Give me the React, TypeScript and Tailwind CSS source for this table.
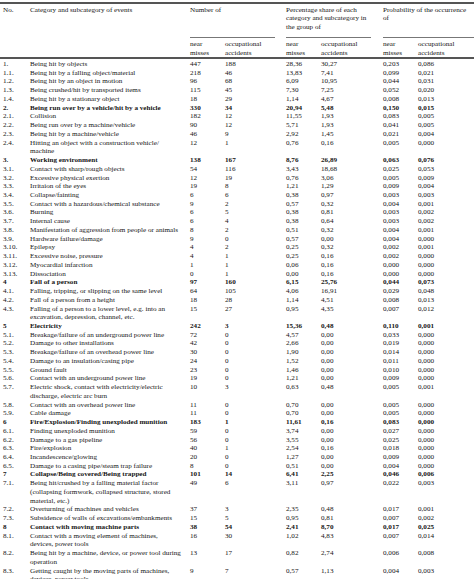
import React from "react";

type Row = { no: string; lines: string[]; v: string[]; bold?: boolean };

const rows: Row[] = [
  { no: "1.", lines: ["Being hit by objects"], v: ["447", "188", "28,36", "30,27", "0,203", "0,086"] },
  { no: "1.1.", lines: ["Being hit by a falling object/material"], v: ["218", "46", "13,83", "7,41", "0,099", "0,021"] },
  { no: "1.2.", lines: ["Being hit by an object in motion"], v: ["96", "68", "6,09", "10,95", "0,044", "0,031"] },
  { no: "1.3.", lines: ["Being crushed/hit by transported items"], v: ["115", "45", "7,30", "7,25", "0,052", "0,020"] },
  { no: "1.4.", lines: ["Being hit by a stationary object"], v: ["18", "29", "1,14", "4,67", "0,008", "0,013"] },
  { no: "2.", bold: true, lines: ["Being run over by a vehicle/hit by a vehicle"], v: ["330", "34", "20,94", "5,48", "0,150", "0,015"] },
  { no: "2.1.", lines: ["Collision"], v: ["182", "12", "11,55", "1,93", "0,083", "0,005"] },
  { no: "2.2.", lines: ["Being run over by a machine/vehicle"], v: ["90", "12", "5,71", "1,93", "0,041", "0,005"] },
  { no: "2.3.", lines: ["Being hit by a machine/vehicle"], v: ["46", "9", "2,92", "1,45", "0,021", "0,004"] },
  { no: "2.4.", lines: ["Hitting an object with a construction vehicle/", "machine"], v: ["12", "1", "0,76", "0,16", "0,005", "0,000"] },
  { no: "3.", bold: true, lines: ["Working environment"], v: ["138", "167", "8,76", "26,89", "0,063", "0,076"] },
  { no: "3.1.", lines: ["Contact with sharp/rough objects"], v: ["54", "116", "3,43", "18,68", "0,025", "0,053"] },
  { no: "3.2.", lines: ["Excessive physical exertion"], v: ["12", "19", "0,76", "3,06", "0,005", "0,009"] },
  { no: "3.3.", lines: ["Irritaion of the eyes"], v: ["19", "8", "1,21", "1,29", "0,009", "0,004"] },
  { no: "3.4.", lines: ["Collapse/fainting"], v: ["6", "6", "0,38", "0,97", "0,003", "0,003"] },
  { no: "3.5.", lines: ["Contact with a hazardous/chemical substance"], v: ["9", "2", "0,57", "0,32", "0,004", "0,001"] },
  { no: "3.6.", lines: ["Burning"], v: ["6", "5", "0,38", "0,81", "0,003", "0,002"] },
  { no: "3.7.", lines: ["Internal cause"], v: ["6", "4", "0,38", "0,64", "0,003", "0,002"] },
  { no: "3.8.", lines: ["Manifestation of aggression from people or animals"], v: ["8", "2", "0,51", "0,32", "0,004", "0,001"] },
  { no: "3.9.", lines: ["Hardware failure/damage"], v: ["9", "0", "0,57", "0,00", "0,004", "0,000"] },
  { no: "3.10.", lines: ["Epilepsy"], v: ["4", "2", "0,25", "0,32", "0,002", "0,001"] },
  { no: "3.11.", lines: ["Excessive noise, pressure"], v: ["4", "1", "0,25", "0,16", "0,002", "0,000"] },
  { no: "3.12.", lines: ["Myocardial infarction"], v: ["1", "1", "0,06", "0,16", "0,000", "0,000"] },
  { no: "3.13.", lines: ["Dissociation"], v: ["0", "1", "0,00", "0,16", "0,000", "0,000"] },
  { no: "4", bold: true, lines: ["Fall of a person"], v: ["97", "160", "6,15", "25,76", "0,044", "0,073"] },
  { no: "4.1.", lines: ["Falling, tripping, or slipping on the same level"], v: ["64", "105", "4,06", "16,91", "0,029", "0,048"] },
  { no: "4.2.", lines: ["Fall of a person from a height"], v: ["18", "28", "1,14", "4,51", "0,008", "0,013"] },
  { no: "4.3.", lines: ["Falling of a person to a lower level, e.g. into an", "excavation, depression, channel, etc."], v: ["15", "27", "0,95", "4,35", "0,007", "0,012"] },
  { no: "5", bold: true, lines: ["Electricity"], v: ["242", "3", "15,36", "0,48", "0,110", "0,001"] },
  { no: "5.1.", lines: ["Breakage/failure of an underground power line"], v: ["72", "0", "4,57", "0,00", "0,033", "0,000"] },
  { no: "5.2.", lines: ["Damage to other installations"], v: ["42", "0", "2,66", "0,00", "0,019", "0,000"] },
  { no: "5.3.", lines: ["Breakage/failure of an overhead power line"], v: ["30", "0", "1,90", "0,00", "0,014", "0,000"] },
  { no: "5.4.", lines: ["Damage to an insulation/casing pipe"], v: ["24", "0", "1,52", "0,00", "0,011", "0,000"] },
  { no: "5.5.", lines: ["Ground fault"], v: ["23", "0", "1,46", "0,00", "0,010", "0,000"] },
  { no: "5.6.", lines: ["Contact with an underground power line"], v: ["19", "0", "1,21", "0,00", "0,009", "0,000"] },
  { no: "5.7.", lines: ["Electric shock, contact with electricity/electric", "discharge, electric arc burn"], v: ["10", "3", "0,63", "0,48", "0,005", "0,001"] },
  { no: "5.8.", lines: ["Contact with an overhead power line"], v: ["11", "0", "0,70", "0,00", "0,005", "0,000"] },
  { no: "5.9.", lines: ["Cable damage"], v: ["11", "0", "0,70", "0,00", "0,005", "0,000"] },
  { no: "6", bold: true, lines: ["Fire/Explosion/Finding unexploded munition"], v: ["183", "1", "11,61", "0,16", "0,083", "0,000"] },
  { no: "6.1.", lines: ["Finding unexploded munition"], v: ["59", "0", "3,74", "0,00", "0,027", "0,000"] },
  { no: "6.2.", lines: ["Damage to a gas pipeline"], v: ["56", "0", "3,55", "0,00", "0,025", "0,000"] },
  { no: "6.3.", lines: ["Fire/explosion"], v: ["40", "1", "2,54", "0,16", "0,018", "0,000"] },
  { no: "6.4.", lines: ["Incandescence/glowing"], v: ["20", "0", "1,27", "0,00", "0,009", "0,000"] },
  { no: "6.5.", lines: ["Damage to a casing pipe/steam trap failure"], v: ["8", "0", "0,51", "0,00", "0,004", "0,000"] },
  { no: "7", bold: true, lines: ["Collapse/Being covered/Being trapped"], v: ["101", "14", "6,41", "2,25", "0,046", "0,006"] },
  { no: "7.1.", lines: ["Being hit/crushed by a falling material factor", "(collapsing formwork, collapsed structure, stored", "material, etc.)"], v: ["49", "6", "3,11", "0,97", "0,022", "0,003"] },
  { no: "7.2.", lines: ["Overturning of machines and vehicles"], v: ["37", "3", "2,35", "0,48", "0,017", "0,001"] },
  { no: "7.3.", lines: ["Subsidence of walls of excavations/embankments"], v: ["15", "5", "0,95", "0,81", "0,007", "0,002"] },
  { no: "8", bold: true, lines: ["Contact with moving machine parts"], v: ["38", "54", "2,41", "8,70", "0,017", "0,025"] },
  { no: "8.1.", lines: ["Contact with a moving element of machines,", "devices, power tools"], v: ["16", "30", "1,02", "4,83", "0,007", "0,014"] },
  { no: "8.2.", lines: ["Being hit by a machine, device, or power tool during", "operation"], v: ["13", "17", "0,82", "2,74", "0,006", "0,008"] },
  { no: "8.3.", lines: ["Getting caught by the moving parts of machines,", "devices, power tools"], v: ["9", "7", "0,57", "1,13", "0,004", "0,003"] },
];

export default function App() {
  return (
    <div className="w-[474px] h-[579px] overflow-hidden bg-white text-[#151515] font-['Liberation_Serif','Times_New_Roman',serif] text-[7.15px] leading-[8.74px]">
      <div className="mt-[2px] h-[1.5px] bg-[#555]" />
      <table className="w-[474px] table-fixed border-collapse">
        <colgroup>
          <col className="w-[30px]" />
          <col className="w-[160px]" />
          <col className="w-[35px]" />
          <col className="w-[61px]" />
          <col className="w-[35px]" />
          <col className="w-[62px]" />
          <col className="w-[35px]" />
          <col className="w-[56px]" />
        </colgroup>
        <thead>
          <tr>
            <th rowSpan={2} className="p-0 pl-[3px] pt-[2px] align-top text-left font-normal">No.</th>
            <th rowSpan={2} className="p-0 pt-[2px] align-top text-left font-normal whitespace-nowrap">Category and subcategory of events</th>
            <th colSpan={2} className="p-0 pt-[2px] align-top text-left font-normal">
              <div className="mr-[11px] h-[32px] border-b border-[#777]">Number of</div>
            </th>
            <th colSpan={2} className="p-0 pt-[2px] align-top text-left font-normal">
              <div className="mr-[12px] h-[32px] border-b border-[#777]">
                Percentage share of each
                <br />
                category and subcategory in
                <br />
                the group of
              </div>
            </th>
            <th colSpan={2} className="p-0 pt-[2px] align-top text-left font-normal">
              <div className="h-[32px] border-b border-[#777] whitespace-nowrap">
                Probability of the occurrence
                <br />
                of
              </div>
            </th>
          </tr>
          <tr>
            <th className="p-0 pt-[2.5px] text-left font-normal align-top">near<br />misses</th>
            <th className="p-0 pt-[2.5px] text-left font-normal align-top">occupational<br />accidents</th>
            <th className="p-0 pt-[2.5px] text-left font-normal align-top">near<br />misses</th>
            <th className="p-0 pt-[2.5px] text-left font-normal align-top">occupational<br />accidents</th>
            <th className="p-0 pt-[2.5px] text-left font-normal align-top">near<br />misses</th>
            <th className="p-0 pt-[2.5px] text-left font-normal align-top">occupational<br />accidents</th>
          </tr>
          <tr>
            <td colSpan={8} className="p-0">
              <div className="h-[1.5px] bg-[#555]" />
              <div className="h-[1px]" />
            </td>
          </tr>
        </thead>
        <tbody>
          {rows.map((r) => (
            <tr key={r.no} className={r.bold ? "font-bold" : "font-normal"}>
              <td className="p-0 pl-[3px] align-top whitespace-nowrap">{r.no}</td>
              <td className="p-0 align-top whitespace-nowrap">
                {r.lines.map((l, i) => (
                  <div key={i}>{l}</div>
                ))}
              </td>
              {r.v.map((val, i) => (
                <td key={i} className="p-0 align-top whitespace-nowrap">{val}</td>
              ))}
            </tr>
          ))}
        </tbody>
      </table>
    </div>
  );
}
